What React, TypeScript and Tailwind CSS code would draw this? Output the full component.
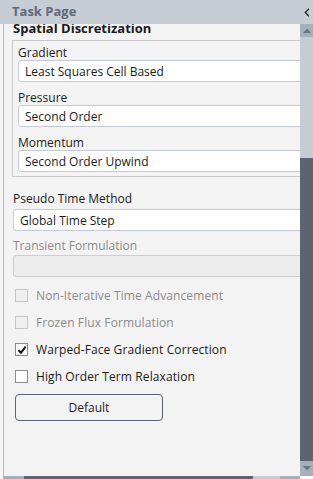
import type { ReactNode } from 'react';

function Label({ children, className = '' }: { children: ReactNode; className?: string }) {
  return <div className={`h-[16px] leading-[18px] whitespace-nowrap ${className}`}>{children}</div>;
}

function Field({ value, className = '' }: { value: string; className?: string }) {
  return (
    <div
      className={`h-[22px] leading-[21px] pl-[6px] bg-white border border-[#c4cadb] rounded-[3px] whitespace-nowrap ${className}`}
    >
      {value}
    </div>
  );
}

function Check({ label, checked = false, disabled = false }: { label: string; checked?: boolean; disabled?: boolean }) {
  return (
    <div className="h-[27px] flex items-center ml-[11px] gap-[8px]">
      <div
        className={`w-[13px] h-[13px] border flex items-center justify-center ${
          disabled ? 'bg-[#f0f0f0] border-[#c6c6c6]' : 'bg-white border-[#8c8c8c]'
        }`}
      >
        {checked && (
          <svg width="10" height="10" viewBox="0 0 10 10">
            <path d="M1.5 5.2 L4 7.8 L8.6 1.6" fill="none" stroke="#111" strokeWidth="2" />
          </svg>
        )}
      </div>
      <span className={`whitespace-nowrap tracking-[0.1px] ${disabled ? 'text-[#8b8b8b]' : ''}`}>{label}</span>
    </div>
  );
}

export default function App() {
  return (
    <div className="w-[313px] h-[479px] overflow-hidden bg-[#f3f3f3] flex flex-col font-['Open_Sans',sans-serif] text-[12px] text-[#1b1b1b]">
      {/* Header */}
      <div className="h-[24px] shrink-0 bg-[#c7cdd4] flex items-center justify-between pl-[12px] pr-[3px]">
        <span className="font-bold text-[13px] text-[#5e6978]">Task Page</span>
        <svg width="6" height="9" viewBox="0 0 6 9">
          <path d="M4.8 0.8 L1.3 4.5 L4.8 8.2" fill="none" stroke="#2b2b2b" strokeWidth="1.4" />
        </svg>
      </div>

      <div className="flex h-[452px] shrink-0">
        <div className="w-[3px] bg-[#f6f6f6]" />
        {/* Content */}
        <div className="flex-1 border-l border-[#b8b8b8] overflow-hidden">
          <div className="w-[340px] -mt-[4px]">
            <div className="pl-[9px] h-[16px] leading-[16px] font-bold text-[13px]">Spatial Discretization</div>
            <div className="mt-[4px] ml-[8px] border border-[#c9c9c9] pb-[4px] pl-[5px]">
              <Label className="mt-[3px]">Gradient</Label>
              <Field value="Least Squares Cell Based" />
              <Label className="mt-[7px]">Pressure</Label>
              <Field value="Second Order" />
              <Label className="mt-[7px]">Momentum</Label>
              <Field value="Second Order Upwind" />
            </div>

            <Label className="mt-[13px] pl-[9px]">Pseudo Time Method</Label>
            <Field value="Global Time Step" className="mt-[3px] ml-[9px]" />
            <Label className="mt-[6px] pl-[9px] text-[#8b8b8b]">Transient Formulation</Label>
            <div className="mt-[2px] ml-[9px] h-[22px] bg-[#ececec] border border-[#cdcdcd] rounded-[3px]" />

            <div className="mt-[5px]">
              <Check label="Non-Iterative Time Advancement" disabled />
              <Check label="Frozen Flux Formulation" disabled />
              <Check label="Warped-Face Gradient Correction" checked />
              <Check label="High Order Term Relaxation" />
            </div>

            <button className="mt-[4px] ml-[11px] w-[148px] h-[27px] border border-[#5c6370] rounded-[4px] bg-[#f3f3f3] text-[12px]">
              Default
            </button>
          </div>
        </div>

        {/* Vertical scrollbar */}
        <div className="w-[13px] flex flex-col">
          <div className="h-[13px] bg-[#a5b1b9] flex items-center justify-center">
            <svg width="8" height="5" viewBox="0 0 8 5">
              <path d="M0 5 L4 0.5 L8 5 Z" fill="#6b757e" />
            </svg>
          </div>
          <div className="h-[121px] bg-[#c5ccd2]" />
          <div className="flex-1 bg-[#5c6371]" />
          <div className="h-[15px] bg-[#a5b1b9] flex items-center justify-center">
            <svg width="8" height="5" viewBox="0 0 8 5">
              <path d="M0 0 L4 4.5 L8 0 Z" fill="#6b757e" />
            </svg>
          </div>
        </div>
      </div>

      {/* Horizontal scrollbar */}
      <div className="h-[3px] flex shrink-0">
        <div className="w-[3px] bg-[#f6f6f6]" />
        <div className="w-[21px] bg-[#a5b1b9]" />
        <div className="w-[229px] bg-[#5c6371]" />
        <div className="w-[27px] bg-[#c5ccd2]" />
        <div className="w-[20px] bg-[#a5b1b9]" />
        <div className="flex-1 bg-white" />
      </div>
    </div>
  );
}
